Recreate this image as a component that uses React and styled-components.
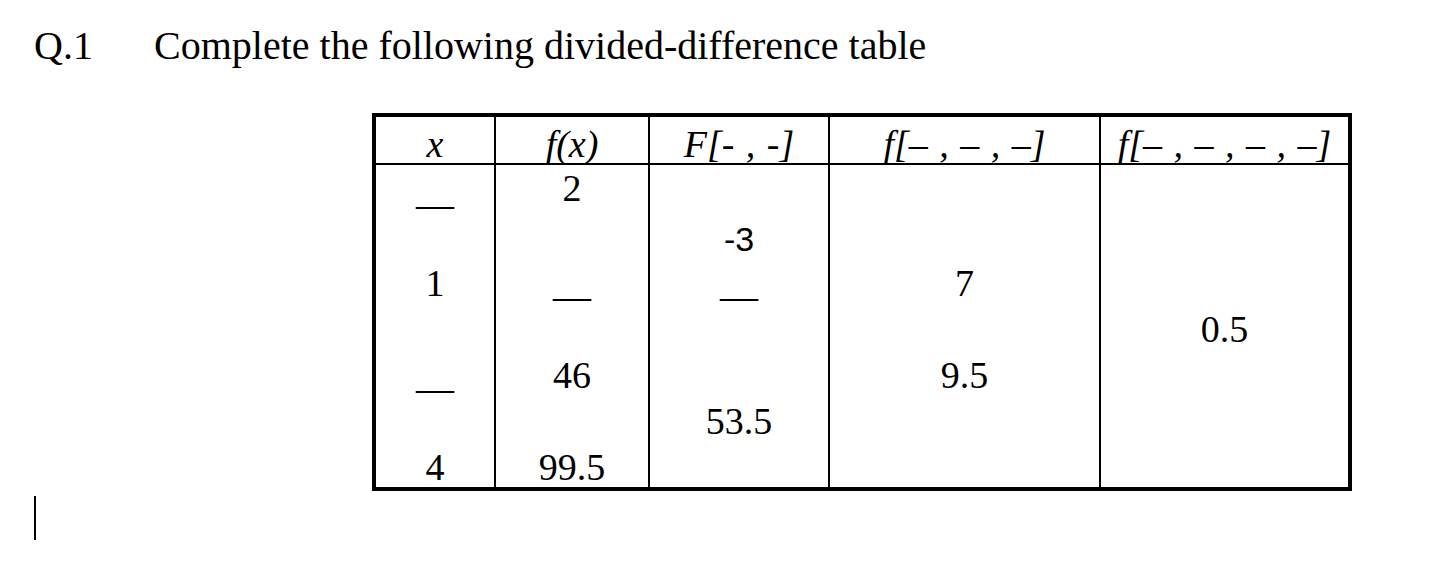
import styled, { createGlobalStyle } from "styled-components";

const GlobalStyle = createGlobalStyle`
  html, body {
    margin: 0;
    padding: 0;
    background: #ffffff;
  }
  body {
    font-family: "Liberation Serif", "Times New Roman", serif;
    color: #000000;
  }
`;

const headers = ["x", "f(x)", "F[- , -]", "f[– , – , –]", "f[– , – , – , –]"];

// each column lists its entries and the line (1..7) where they sit
const columns = [
  [
    { text: "__", row: 1 },
    { text: "1", row: 3 },
    { text: "__", row: 5 },
    { text: "4", row: 7 },
  ],
  [
    { text: "2", row: 1, nudge: -3 },
    { text: "__", row: 3 },
    { text: "46", row: 5 },
    { text: "99.5", row: 7 },
  ],
  [
    { text: "-3", row: 2, sans: true, nudge: 2 },
    { text: "__", row: 3 },
    { text: "53.5", row: 6 },
  ],
  [
    { text: "7", row: 3 },
    { text: "9.5", row: 5 },
  ],
  [{ text: "0.5", row: 4 }],
];

export default function App() {
  return (
    <>
      <GlobalStyle />
      <Sheet>
        <Heading>
          <Number>Q.1</Number>
          <Prompt>Complete the following divided-difference table</Prompt>
        </Heading>
        <Table>
          {headers.map((h, i) => (
            <HeadCell key={h} $last={i === headers.length - 1}>
              {h}
            </HeadCell>
          ))}
          {columns.map((col, i) => (
            <BodyCell key={i} $last={i === columns.length - 1}>
              {col.map((v, j) => (
                <Value key={j} $row={v.row} $sans={v.sans} $nudge={v.nudge || 0}>
                  {v.text}
                </Value>
              ))}
            </BodyCell>
          ))}
        </Table>
        <Caret />
      </Sheet>
    </>
  );
}

const Sheet = styled.div`
  padding: 23px 34px 0;
  width: 1443px;
  height: 576px;
  box-sizing: border-box;
  overflow: hidden;
`;

const Heading = styled.div`
  display: flex;
  align-items: baseline;
  font-size: 40px;
  line-height: 46px;
`;

const Number = styled.span`
  width: 120px;
  flex: none;
`;

const Prompt = styled.span``;

const Table = styled.div`
  display: grid;
  grid-template-columns: 120px 154px 180px 271px 247px;
  grid-template-rows: 48px 322px;
  width: fit-content;
  margin: 44px 0 0 338px;
  border: 4px solid #000;
`;

const HeadCell = styled.div`
  box-sizing: border-box;
  border-bottom: 2px solid #000;
  border-right: ${(p) => (p.$last ? "none" : "2px solid #000")};
  padding-top: 8px;
  font-style: italic;
  font-size: 38px;
  line-height: 38px;
  word-spacing: 2px;
  text-align: center;
  white-space: pre;
`;

const BodyCell = styled.div`
  box-sizing: border-box;
  display: grid;
  grid-template-rows: repeat(7, 46px);
  align-content: start;
  padding-top: 3px;
  border-right: ${(p) => (p.$last ? "none" : "2px solid #000")};
`;

const Value = styled.div`
  grid-row: ${(p) => p.$row};
  margin-top: ${(p) => p.$nudge}px;
  text-align: center;
  font-family: ${(p) =>
    p.$sans ? '"Liberation Sans", Arial, sans-serif' : '"Liberation Serif", "Times New Roman", serif'};
  font-size: ${(p) => (p.$sans ? "34px" : "38px")};
  line-height: 46px;
`;

const Caret = styled.div`
  width: 2px;
  height: 44px;
  margin-top: 5px;
  background: #000;
`;
